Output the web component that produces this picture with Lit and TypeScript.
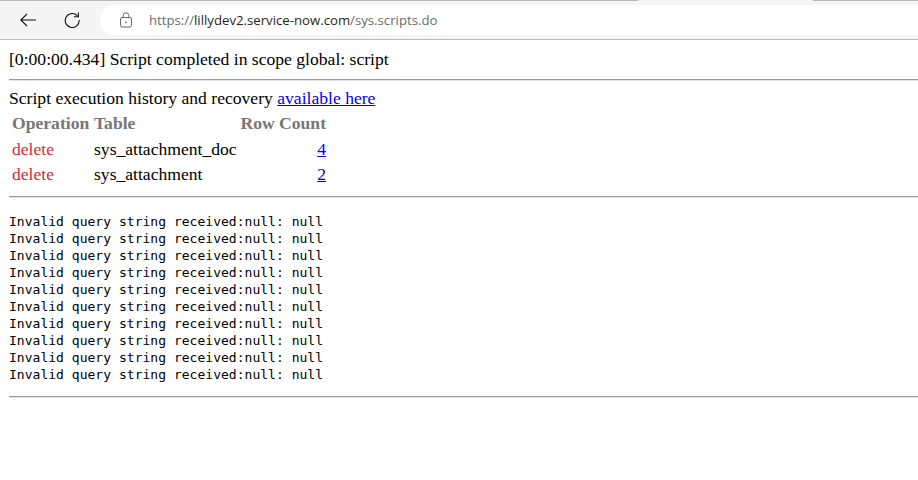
import { LitElement, html, css } from "lit";
import { customElement } from "lit/decorators.js";

@customElement("app-root")
export class AppRoot extends LitElement {
  static styles = css`
    :host { display: block; width: 918px; height: 480px; background: #fff; overflow: hidden; font-family: "Liberation Serif", serif; font-size: 17.6px; color: #000; }
    .tabline { display: flex; height: 1px; background: #b9b9b9; }
    .tabgap { width: 175px; margin-left: 638px; background: #f5f5f5; }
    .toolbar { display: flex; align-items: center; height: 38px; background: #f5f5f5; box-sizing: border-box; padding-top: 3px; padding-bottom: 3px;}
    .rule { height: 1px; background: #bdbdbd; }
    .nav { width: 16px; height: 16px; flex: none; display: block; }
    .back { margin-left: 20px; }
    .reload { margin-left: 28px; }
    .omni { flex: 1; margin-left: 20px; height: 30px; border-radius: 15px 0 0 15px; background: #fff; display: flex; align-items: center; font-family: "Open Sans", sans-serif; font-size: 13.2px; color: #6b6b6b; }
    .lock { width: 14px; height: 16px; margin-left: 19px; margin-right: 16px; flex: none; }
    .host { color: #1f1f1f; }
    main { padding: 0 0 0 9px; }
    .status { height: 39px; display: flex; align-items: center; box-sizing: border-box; }
    hr { border: 0; border-bottom: 1px solid #e2e2e2; height: 1px; background: #9a9a9a; margin: 0; }
    .history { height: 20px; margin-top: 7px; line-height: 20px; }
    a { color: #0000ee; text-decoration: underline; }
    .grid { display: grid; grid-template-columns: 82px 143px 89px; margin: 2px 0 0 3px; width: 314px; line-height: 20px; }
    .head { font-weight: bold; color: #767676; height: 24px; padding-top: 3px; box-sizing: border-box; }
    .cell { height: 25px; padding-top: 5px; box-sizing: border-box; }
    .del { color: #dc1f3c; }
    .num { text-align: right; }
    .sep { margin-top: 12px; }
    pre { margin: 15px 0 13px; font-family: "DejaVu Sans Mono", monospace; font-size: 13px; letter-spacing: 0.025px; line-height: 17px; color: #000; }
  `;

  render() {
    const lines = Array.from({ length: 10 }, () => "Invalid query string received:null: null").join("\n");
    return html`
      <div class="tabline"><div class="tabgap"></div></div>
      <div class="toolbar">
        <svg class="nav back" viewBox="0 0 16 16" fill="none" stroke="#111" stroke-width="1.1"><path d="M0.7 8H16M7 2L0.8 8l6.2 6"/></svg>
        <svg class="nav reload" viewBox="0 0 16 16" fill="none" stroke="#111" stroke-width="1.1"><path d="M13.4 3.8A7 7 0 1 0 15.2 8"/><path d="M14.4 0.5v4.2H9.9"/></svg>
        <div class="omni">
          <svg class="lock" viewBox="0 0 14 16" fill="none" stroke="#666" stroke-width="1"><rect x="1.5" y="5.5" width="11" height="9.5" rx="1.5"/><path d="M4.2 5.5V3.6a2.8 2.8 0 0 1 5.6 0V5.5"/><circle cx="7" cy="10.3" r="0.9" fill="#666" stroke="none"/></svg>
          <span>https://<span class="host">lillydev2.service-now.com</span>/sys.scripts.do</span>
        </div>
      </div>
      <div class="rule"></div>
      <main>
        <div class="status">[0:00:00.434] Script completed in scope global: script</div>
        <hr />
        <div class="history">Script execution history and recovery <a href="#">available here</a></div>
        <div class="grid">
          <div class="head">Operation</div><div class="head">Table</div><div class="head num">Row Count</div>
          <div class="cell del">delete</div><div class="cell">sys_attachment_doc</div><div class="cell num"><a href="#">4</a></div>
          <div class="cell del">delete</div><div class="cell">sys_attachment</div><div class="cell num"><a href="#">2</a></div>
        </div>
        <hr class="sep" />
        <pre>${lines}</pre>
        <hr />
      </main>
    `;
  }
}
